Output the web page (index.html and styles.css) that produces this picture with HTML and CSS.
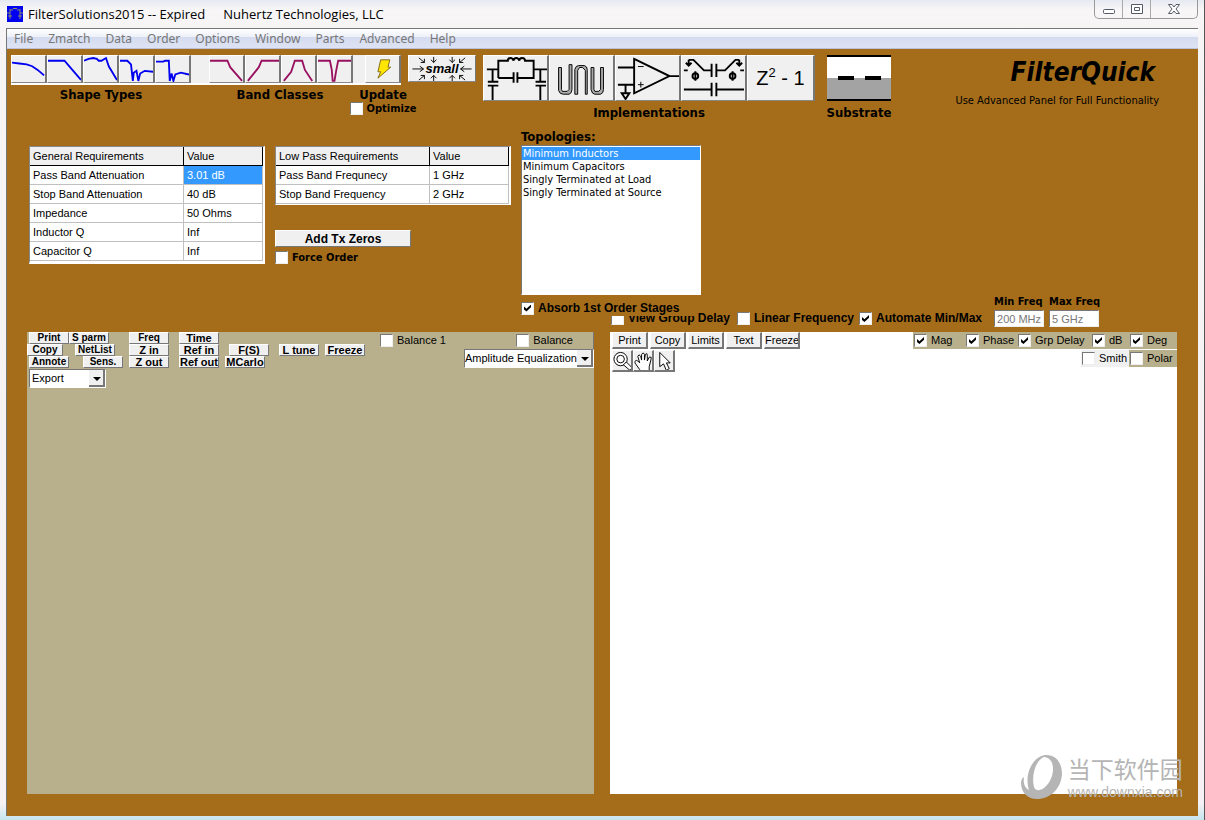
FILE: index.html
```
<!DOCTYPE html>
<html lang="en">
<head>
    <meta charset="UTF-8">
    <meta name="viewport" content="width=device-width, initial-scale=1.0">
    <title>FilterSolutions2015 -- Expired</title>
    <link rel="stylesheet" href="styles.css">
</head>
<body>
    <header class="titlebar">
        <svg class="app-icon" width="16" height="16" viewBox="0 0 16 16">
            <rect width="16" height="16" fill="#0000f0"/>
            <path d="M0 7h3M13 7h3M3 3v10M13 3v10M3 4h3M10 4h3M1 10h4M11 10h4M6 3q1-2 2 0q1-2 2 0" fill="none" stroke="#8c8c70"/>
        </svg>
        <span class="app-title">FilterSolutions2015 -- Expired</span>
        <span class="app-title">Nuhertz Technologies, LLC</span>
        <div class="window-buttons">
            <button aria-label="Minimize"><svg width="14" height="12" viewBox="0 0 14 12"><rect x="1.500" y="6.500" width="11" height="4" rx="1" fill="#fff" stroke="#555a68"/></svg></button>
            <button aria-label="Maximize"><svg width="14" height="12" viewBox="0 0 14 12"><path d="M1.500 1.500h11v9h-11zM4.500 4.500h5v3h-5z" fill="#fff" stroke="#555a68"/></svg></button>
            <button aria-label="Close" class="close"><svg width="14" height="12" viewBox="0 0 14 12"><path d="M1.500 1.500h3.500l2 2.500 2-2.500h3.500l-3.500 4.500 3.500 4.500h-3.500l-2-2.500-2 2.500h-3.500l3.500-4.500z" fill="#fff" stroke="#555a68"/></svg></button>
        </div>
    </header>

    <div class="frame">
        <nav class="menubar">
            <a href="#">File</a>
            <a href="#">Zmatch</a>
            <a href="#">Data</a>
            <a href="#">Order</a>
            <a href="#">Options</a>
            <a href="#">Window</a>
            <a href="#">Parts</a>
            <a href="#">Advanced</a>
            <a href="#">Help</a>
        </nav>

        <main>
            <!-- top toolbar -->
            <section class="toolbar">
                <div class="group shapes">
                    <div class="strip">
                        <button aria-label="Gaussian"><svg viewBox="0 0 36 28"><path d="M0 7L8 8L16 9L22 11L28 15L35 21"/></svg></button>
                        <button aria-label="Butterworth"><svg viewBox="0 0 36 28"><path d="M0 5H18L24 12L36 26"/></svg></button>
                        <button aria-label="Chebyshev"><svg viewBox="0 0 36 28"><path d="M0 5L5 3L10 2L14 3L16 5H19L24 2L27 11L36 26"/></svg></button>
                        <button aria-label="Hourglass"><svg viewBox="0 0 36 28"><path d="M0 5H8L12 9L14 27L15 18L18 16L20 27L22 19L27 16L36 17"/></svg></button>
                        <button aria-label="Elliptic"><svg viewBox="0 0 36 28"><path d="M0 6H8L10 5H14L15 27L17 19L19 27L21 20L27 18L36 20"/></svg></button>
                    </div>
                    <span class="caption">Shape Types</span>
                </div>
                <div class="group bands">
                    <div class="strip">
                        <button aria-label="Low pass"><svg viewBox="0 0 36 28"><path d="M0 5H19L22 12L35 27"/></svg></button>
                        <button aria-label="High pass"><svg viewBox="0 0 36 28"><path d="M2 27L14 12L17 5H36"/></svg></button>
                        <button aria-label="Band pass"><svg viewBox="0 0 36 28"><path d="M2 27L10 17L14 5H22L25 15L33 27"/></svg></button>
                        <button aria-label="Band stop"><svg viewBox="0 0 36 28"><path d="M0 5H13L15 15L16 27H18L20 15L22 5H36"/></svg></button>
                    </div>
                    <span class="caption">Band Classes</span>
                </div>
                <div class="group update">
                    <div class="strip">
                        <button aria-label="Update"><svg viewBox="0 0 36 28"><path d="M16 4H26L24 12H27L13 24L16 17H13Z" fill="#ffe600" stroke="#7c6416"/></svg></button>
                    </div>
                    <span class="caption">Update</span>
                    <label class="check bold optimize"><input type="checkbox"> Optimize</label>
                </div>
                <button class="small-button" aria-label="Small"><svg viewBox="0 0 68 27">
                    <g fill="none" stroke="#000"><path d="M2 14H14M10 11L14 14L10 17M66 14H54M58 11L54 14L58 17M9 2L15 7M11 7H15V3M9 26L15 21M11 21H15V25M59 2L53 7M53 3V7H57M59 26L53 21M53 25V21H57M25 1V7M22 4L25 7L28 4M45 1V7M42 4L45 7L48 4M25 27V21M22 24L25 21L28 24M45 27V21M42 24L45 21L48 24"/></g>
                    <text x="34" y="18" class="small-text">small</text></svg></button>
                <div class="group implementations">
                    <div class="strip">
                        <button aria-label="Lumped"><svg viewBox="0 0 66 46"><path d="M3 14H15M15 23H31M35 23H52V5H43Q43 2 40 2Q37 2 37 5Q36 2 34 2Q31 2 31 5Q30 2 28 2Q25 2 25 5H15V23M52 14H66M9 14V27M4 27H15M4 31H15M9 31V46M59 14V27M54 27H65M54 31H65M59 31V46M31 17V28M35 17V28"/></svg></button>
                        <button aria-label="Distributed"><svg class="thin" viewBox="0 0 66 46"><path d="M9 12V36Q10 40 14 40H20Q23 39 23 35V9H20V35L18 37H13L12 35V12ZM26 40V14Q27 10 30 10H36Q39 11 39 14V40H37V15L34 12H31L29 15V40ZM43 12V35Q44 40 47 40H53Q56 39 56 35V12H53V35L51 37H47L46 35V12Z" fill="#aaa"/></svg></button>
                        <button aria-label="Active"><svg viewBox="0 0 66 46"><path d="M2 12H19M2 30H19M19 3L56 21L19 39ZM56 21H66M10 30V39M6 39H14L10 45Z"/><path class="thin" d="M23 11H29M23 30H29M26 27V33"/></svg></button>
                        <button aria-label="Switched capacitor"><svg viewBox="0 0 66 46"><path d="M2 35H31M36 35H65M31 28V42M36 28V42M31 8V22M36 8V22M31 15H23L12 4H7M36 15H45L56 4H60M14 16V26M53 16V26"/><path d="M7 4V9M4 7L7 10L10 7M60 4V9M57 7L60 10L63 7"/><ellipse cx="14" cy="21" rx="3" ry="3"/><ellipse cx="53" cy="21" rx="3" ry="3"/><path d="M2 15H6M61 15H65"/></svg></button>
                        <button class="digital">Z<sup>2</sup> - 1</button>
                    </div>
                    <span class="caption">Implementations</span>
                </div>
                <div class="group substrate">
                    <button aria-label="Substrate"><svg viewBox="0 0 64 46"><rect width="64" height="46" fill="#fff"/><rect y="23" width="64" height="23" fill="#a3a3a3"/><path d="M0 1H64M0 45H64" stroke="#000" stroke-width="2"/><path d="M11 23H27M38 23H54" stroke="#000" stroke-width="4"/></svg></button>
                    <span class="caption">Substrate</span>
                </div>
                <div class="brand">
                    <h1>FilterQuick</h1>
                    <p>Use Advanced Panel for Full Functionality</p>
                </div>
            </section>

            <!-- requirement grids and topology list -->
            <section class="setup">
                <table class="grid">
                    <thead><tr><th>General Requirements</th><th>Value</th></tr></thead>
                    <tbody>
                        <tr><td>Pass Band Attenuation</td><td class="selected">3.01 dB</td></tr>
                        <tr><td>Stop Band Attenuation</td><td>40 dB</td></tr>
                        <tr><td>Impedance</td><td>50 Ohms</td></tr>
                        <tr><td>Inductor Q</td><td>Inf</td></tr>
                        <tr><td>Capacitor Q</td><td>Inf</td></tr>
                    </tbody>
                </table>
                <div class="lowpass">
                    <table class="grid">
                        <thead><tr><th>Low Pass Requirements</th><th>Value</th></tr></thead>
                        <tbody>
                            <tr><td>Pass Band Frequnecy</td><td>1 GHz</td></tr>
                            <tr><td>Stop Band Frequency</td><td>2 GHz</td></tr>
                        </tbody>
                    </table>
                    <button class="btn zeros">Add Tx Zeros</button>
                    <label class="check bold"><input type="checkbox"> Force Order</label>
                </div>
                <div class="topologies">
                    <label class="caption" for="topology">Topologies:</label>
                    <select id="topology" size="4">
                        <option selected>Minimum Inductors</option>
                        <option>Minimum Capacitors</option>
                        <option>Singly Terminated at Load</option>
                        <option>Singly Terminated at Source</option>
                    </select>
                    <label class="check sans-bold absorb"><input type="checkbox" checked> Absorb 1st Order Stages</label>
                </div>
            </section>

            <section class="panels">
                <div class="options">
                    <label class="check sans-bold"><input type="checkbox"> View Group Delay</label>
                    <label class="check sans-bold"><input type="checkbox"> Linear Frequency</label>
                    <label class="check sans-bold"><input type="checkbox" checked> Automate Min/Max</label>
                    <label class="freq">Min Freq <input type="text" value="200 MHz" disabled></label>
                    <label class="freq">Max Freq <input type="text" value="5 GHz" disabled></label>
                </div>

                <!-- schematic -->
                <div class="panel schematic">
                    <div class="tools">
                        <div class="stack files">
                            <div class="row inset"><button class="btn tiny">Print</button><button class="btn tiny">S parm</button></div>
                            <div class="row copy"><button class="btn tiny">Copy</button><button class="btn tiny">NetList</button></div>
                            <div class="row annote"><button class="btn tiny">Annote</button><button class="btn tiny">Sens.</button></div>
                            <select class="export" aria-label="Export"><option>Export</option></select>
                        </div>
                        <div class="stack">
                            <button class="btn tiny">Freq</button>
                            <button class="btn">Z in</button>
                            <button class="btn">Z out</button>
                        </div>
                        <div class="stack">
                            <button class="btn">Time</button>
                            <button class="btn">Ref in</button>
                            <button class="btn">Ref out</button>
                        </div>
                        <div class="stack lower">
                            <button class="btn fs">F(S)</button>
                            <button class="btn">MCarlo</button>
                        </div>
                        <div class="row lower">
                            <button class="btn">L tune</button>
                            <button class="btn">Freeze</button>
                        </div>
                    </div>
                    <div class="balance">
                        <div class="balance-checks">
                            <label class="check"><input type="checkbox"> Balance 1</label>
                            <label class="check"><input type="checkbox"> Balance</label>
                        </div>
                        <select aria-label="Equalization"><option>Amplitude Equalization</option></select>
                    </div>
                </div>

                <!-- frequency response -->
                <div class="panel plot">
                    <div class="plot-tools">
                        <div class="row">
                            <button class="btn">Print</button>
                            <button class="btn">Copy</button>
                            <button class="btn">Limits</button>
                            <button class="btn">Text</button>
                            <button class="btn">Freeze</button>
                        </div>
                        <div class="row icons">
                            <button class="btn" aria-label="Zoom"><svg viewBox="0 0 20 20"><circle cx="8" cy="8" r="7"/><circle cx="8" cy="8" r="4"/><path d="M14 11L20 17L18 20L11 14Z"/></svg></button>
                            <button class="btn" aria-label="Pan"><svg viewBox="0 0 20 20"><path d="M6 19L1 12Q1 8 4 10L6 12L4 5Q5 2 7 5L8 9V3Q10 0 11 3V9L12 3Q14 1 14 4V10L16 6Q19 5 18 8L16 16V20H7Z"/></svg></button>
                            <button class="btn" aria-label="Select"><svg viewBox="0 0 20 20"><path d="M5 1V16L9 13L12 20L15 18L12 12H16Z"/></svg></button>
                        </div>
                    </div>
                    <div class="traces">
                        <div class="trace-row">
                            <label class="check wide"><input type="checkbox" checked> Mag</label>
                            <label class="check wide"><input type="checkbox" checked> Phase</label>
                            <label class="check delay"><input type="checkbox" checked> Grp Delay</label>
                            <label class="check db"><input type="checkbox" checked> dB</label>
                            <label class="check"><input type="checkbox" checked> Deg</label>
                        </div>
                        <div class="trace-row">
                            <label class="check smith"><input type="checkbox"> Smith</label>
                            <label class="check"><input type="checkbox"> Polar</label>
                        </div>
                    </div>
                </div>
            </section>
        </main>
    </div>

    <div class="watermark">
        <svg width="44" height="46" viewBox="0 0 44 46"><path fill-rule="evenodd" d="M25 1C36 0 42 9 42 20C41 35 30 45 17 45C8 45 1 39 1 29C1 26 2 24 4 23C3 30 5 34 9 36C4 21 12 3 25 1ZM24 3C16 6 11 21 14 33C16 38 22 37 27 31C35 22 36 4 24 3Z" fill="currentColor"/></svg>
        <div>
            <div class="mark-name" lang="zh">当下软件园</div>
            <div class="mark-url">www.downxia.com</div>
        </div>
    </div>
</body>
</html>
```
FILE: styles.css
```
* {
    box-sizing: border-box;
}
body {
    margin: 0;
    min-height: 100vh;
    padding: 0 6px 4px 6px;
    display: flex;
    flex-direction: column;
    font-family: "Liberation Sans", Arial, sans-serif;
    font-size: 11px;
    line-height: 13px;
    color: #000;
    background: linear-gradient(#e6e9f1, #f8f6f7 10px, #f7f4f5 28px, #f5f1f4 98%, #c5e5ef);
    border-right: 1px solid #555;
}
button, input, select {
    font: inherit;
    color: inherit;
    margin: 0;
    padding: 0;
    border-radius: 0;
}
svg {
    display: block;
}

/* title bar */
.titlebar {
    display: flex;
    height: 28px;
    align-items: center;
    font: 12px/18px "Noto Sans", sans-serif;
}
.app-icon {
    margin: 0 5px 0 1px;
}
.app-title {
    margin-right: 18px;
    font-family: "Open Sans", sans-serif;
    font-size: 13px;
    white-space: nowrap;
}
.window-buttons {
    display: flex;
    align-self: flex-start;
    margin-left: auto;
    height: 19px;
    border: 1px solid #999;
    border-top: 0;
    border-radius: 0 0 5px 5px;
}
.window-buttons button {
    width: 28px;
    display: flex;
    align-items: center;
    justify-content: center;
    background: none;
    border: 0;
    border-right: 1px solid #aaa;
}
.window-buttons .close {
    width: 46px;
    border-right: 0;
}

/* window frame and menu */
.frame {
    flex: 1;
    display: flex;
    flex-direction: column;
    border: 1px solid #777;
    border-width: 1px 0 0 1px;
}
.menubar {
    display: flex;
    gap: 15px;
    height: 20px;
    padding: 0 7px;
    align-items: center;
    font: 12px/18px "Noto Sans", sans-serif;
    background: linear-gradient(#fff, #edf0f9 40%, #d5dcef 42%, #dde3f4 95%, #b9c2d8 95%);
}
.menubar a {
    color: #777;
    text-decoration: none;
}
main {
    flex: 1;
    display: flex;
    flex-direction: column;
    background: #a56d1a;
}

/* toolbar */
.toolbar {
    display: flex;
    align-items: flex-start;
    padding: 6px 39px 0 4px;
    height: 80px;
}
.group {
    display: flex;
    flex-direction: column;
    align-items: center;
}
.strip {
    display: flex;
    background: #f0f0f0;
}
.caption, .bold, .freq {
    font-family: "DejaVu Sans Condensed", Tahoma, sans-serif;
    font-weight: bold;
    white-space: nowrap;
}
.caption {
    font-size: 13px;
    line-height: 15px;
    margin-top: 2px;
}
.toolbar button {
    background: #f0f0f0;
    border: 1px solid #fff;
    border-right: 2px solid #777;
    border-bottom: 1px solid #888;
}
.toolbar svg {
    width: 100%;
    height: 100%;
    overflow: hidden;
}
.shapes button, .bands button, .update button {
    width: 36px;
    height: 28px;
}
.shapes .strip, .bands .strip, .update .strip {
    height: 30px;
    border-bottom: 2px solid #fff;
}
.shapes .strip {
    width: 198px;
}
.bands .strip {
    width: 156px;
}
.shapes .caption {
    padding-right: 18px;
}
.bands .caption {
    padding-right: 14px;
}
.shapes path, .bands path {
    fill: none;
    stroke: #0000f0;
    stroke-width: 2;
}
.bands path {
    stroke: #981060;
}
.update {
    width: 36px;
}
.toolbar .small-button {
    width: 68px;
    height: 27px;
    margin: 0 7px;
    border-right-width: 1px;
}
.small-text {
    font: italic bold 14px "Liberation Sans", sans-serif;
    text-anchor: middle;
}
.implementations button {
    width: 66px;
    height: 46px;
}
.implementations svg {
    fill: none;
    stroke: #000;
    stroke-width: 2;
}
.implementations .thin {
    stroke-width: 1;
}
.implementations .caption, .substrate .caption {
    margin-top: 4px;
}
.implementations .digital {
    width: 68px;
    font-size: 20px;
    line-height: 24px;
}
.digital sup {
    font-size: 13px;
    line-height: 0;
}
.substrate {
    width: 64px;
    margin-left: 12px;
}
.toolbar .substrate button {
    width: 64px;
    height: 46px;
    border: 0;
}
.brand {
    margin-left: auto;
    text-align: right;
    font-family: "DejaVu Sans Condensed", Tahoma, sans-serif;
}
.brand h1 {
    margin: 0;
    padding-right: 4px;
    font-size: 26px;
    line-height: 34px;
    font-style: italic;
}
.brand p {
    margin: 5px 0 0;
    white-space: nowrap;
}

/* check boxes */
.check {
    display: flex;
    align-items: center;
    gap: 4px;
    white-space: nowrap;
}
.check input {
    appearance: none;
    flex: none;
    width: 13px;
    height: 13px;
    background: #fff;
    border: 1px solid #eee;
    border-top-color: #777;
    border-left-color: #777;
}
.check input:checked::before {
    content: "";
    display: block;
    width: 7px;
    height: 7px;
    margin: 2px;
    background: #000;
    clip-path: polygon(0 30%, 35% 60%, 100% 0, 100% 40%, 35% 100%, 0 70%);
}
.sans-bold {
    font-size: 12px;
    font-weight: bold;
}

/* requirement grids */
.setup {
    display: flex;
    align-items: flex-start;
    padding-left: 22px;
    gap: 10px;
}
.grid {
    width: 236px;
    margin-top: 17px;
    table-layout: fixed;
    border-spacing: 0;
    background: #fff;
    border: 1px solid #888;
    border-right: 2px solid #fff;
    border-bottom: 3px solid #fff;
}
.lowpass .grid {
    border-bottom-width: 1px;
}
.grid th, .grid td {
    height: 19px;
    padding: 0 3px;
    text-align: left;
    font-weight: normal;
    border-right: 1px solid #c0c0c0;
    border-bottom: 1px solid #c0c0c0;
}
.grid th {
    background: #f0f0f0;
    border-color: #000;
}
.grid th:first-child {
    width: 154px;
}
.grid .selected {
    color: #fff;
    background: #39f;
}
.btn {
    width: 40px;
    height: 12px;
    padding: 0;
    overflow: hidden;
    white-space: nowrap;
    font-weight: bold;
    line-height: 10px;
    background: #f0f0f0;
    border: 1px solid #fff;
    border-right-color: #777;
    border-bottom-color: #777;
}
.zeros {
    display: block;
    width: 136px;
    height: 17px;
    margin: 25px 0 4px;
    font-size: 12px;
    line-height: 14px;
}
.topologies {
    width: 180px;
    display: flex;
    flex-direction: column;
}
.topologies .caption {
    margin: 0 0 1px;
}
.topologies select {
    height: 150px;
    padding: 1px 0;
    overflow: hidden;
    font-family: "DejaVu Sans Condensed", Tahoma, sans-serif;
    background: #fff;
    border: 1px solid #fff;
    border-top-color: #777;
    border-left-color: #777;
    outline: 0;
}
.topologies option {
    min-height: 13px;
    padding: 0 1px;
    line-height: 13px;
    color: #000;
}
.topologies option:checked {
    color: #fff;
    background: #39f linear-gradient(#39f, #39f);
}
/* sits over the first option below it */
.absorb {
    position: relative;
    z-index: 1;
    width: 174px;
    height: 16px;
    margin-top: 5px;
    background: #a56d1a;
}

/* panels */
.panels {
    flex: 1;
    display: grid;
    grid-template-columns: 1fr 1fr;
    grid-template-rows: auto 1fr;
    column-gap: 16px;
    margin-top: -21px;
    padding: 0 21px 22px 20px;
}
.options {
    grid-column: 2;
    display: flex;
    align-items: flex-end;
    gap: 5px;
    padding: 0 0 5px 1px;
}
.options .check {
    min-width: 121px;
    margin-bottom: 2px;
}
.options .check:nth-child(2) {
    min-width: 116px;
}
.options .check:nth-child(3) {
    min-width: 130px;
}
.freq {
    display: flex;
    flex-direction: column;
    gap: 2px;
    width: 50px;
}
.freq input {
    width: 50px;
    height: 17px;
    padding: 0 2px;
    font-family: "Liberation Sans", Arial, sans-serif;
    font-weight: normal;
    color: #777;
    background: #fff;
    border: 1px solid #eee;
    border-top-color: #777;
    border-left-color: #777;
}
.panel {
    grid-row: 2;
    display: flex;
    justify-content: space-between;
    align-items: flex-start;
    min-width: 0;
}
.schematic {
    background: #b8b08c;
}
.plot {
    background: #fff;
}
.tools {
    display: flex;
    align-items: flex-start;
}
.stack {
    display: flex;
    flex-direction: column;
    width: 40px;
    margin-right: 10px;
}
.row {
    display: flex;
}
.files {
    width: 102px;
    margin-right: 0;
}
.tiny {
    font-size: 10px;
}
.inset, .annote {
    padding-left: 2px;
}
.copy {
    gap: 12px;
}
.copy .btn:first-child {
    width: 36px;
}
.annote {
    gap: 14px;
}
.lower {
    padding-top: 12px;
}
.stack.lower {
    width: 44px;
    margin: 0 10px 0 -4px;
}
.fs {
    margin-left: 4px;
}
.row.lower {
    gap: 6px;
}
.export, .balance select {
    appearance: none;
    width: 77px;
    height: 19px;
    margin: 1px 0 0 2px;
    padding: 0 2px;
    border: 1px solid #fff;
    border-top-color: #777;
    border-left-color: #777;
    background: #fff url("data:image/svg+xml,%3Csvg xmlns='http://www.w3.org/2000/svg' width='16' height='17'%3E%3Cpath d='M0 0h16v17H0z' fill='%23f0f0f0'/%3E%3Cpath d='M15 0v16H0' fill='none' stroke='%23777' stroke-width='2'/%3E%3Cpath d='M4 7h8l-4 4z'/%3E%3C/svg%3E") no-repeat right center;
}
.balance {
    display: flex;
    flex-direction: column;
    align-items: flex-end;
}
.balance-checks {
    display: flex;
    height: 17px;
    width: 214px;
    justify-content: space-between;
    padding-right: 20px;
    border-right: 1px solid #777;
}
.balance select {
    width: 130px;
    margin: 0;
    padding: 0;
}
.plot-tools {
    padding-left: 2px;
}
.plot-tools .row {
    gap: 2px;
}
.plot-tools .btn {
    width: 36px;
    height: 17px;
    font-weight: normal;
    line-height: 14px;
    border-right-width: 2px;
    border-bottom-width: 2px;
}
.plot-tools .icons {
    gap: 0;
    margin-top: 1px;
}
.plot-tools .icons .btn {
    width: 21px;
    height: 22px;
}
.icons svg {
    width: 19px;
    height: 20px;
    fill: #fff;
    stroke: #000;
}
.traces {
    display: flex;
    flex-direction: column;
    align-items: flex-end;
    gap: 1px;
}
.trace-row {
    display: flex;
    height: 17px;
}
.trace-row .check {
    width: 48px;
    padding-left: 1px;
    background: #b8b08c;
}
.trace-row .wide {
    width: 52px;
}
.trace-row .delay {
    width: 74px;
}
.trace-row .db {
    width: 38px;
}
.trace-row .smith {
    background: #f0f0f0;
}

/* watermark */
.watermark {
    position: absolute;
    right: 22px;
    bottom: 20px;
    display: flex;
    align-items: flex-end;
    gap: 4px;
    color: #b5b5b5;
    pointer-events: none;
}
.mark-name {
    font: 23px/32px "Noto Sans CJK SC", sans-serif;
}
.mark-url {
    font-size: 14px;
    line-height: 16px;
}
```
